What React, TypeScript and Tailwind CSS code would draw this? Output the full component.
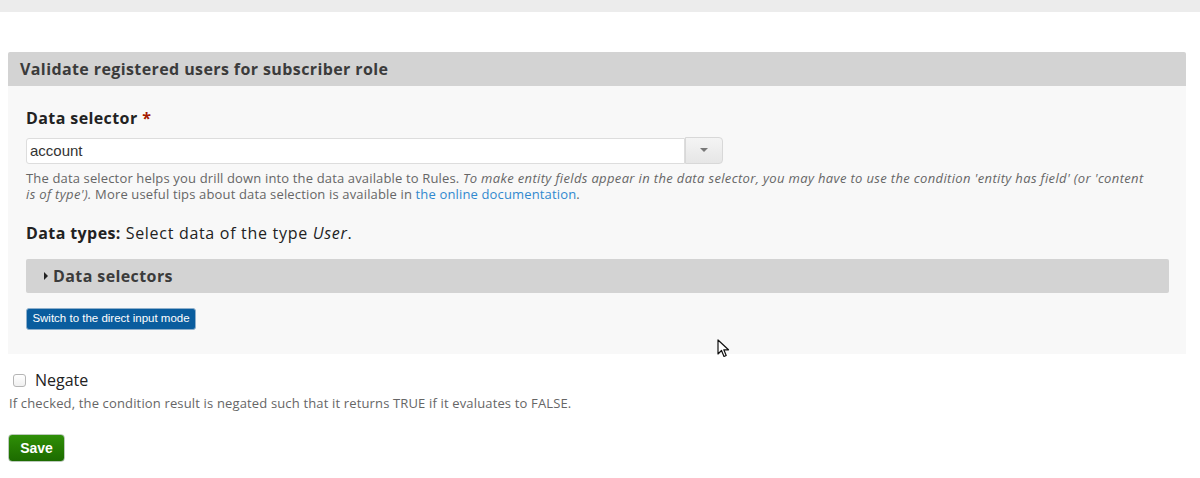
import React from "react";

const sans = "font-['Open_Sans','Noto_Sans',sans-serif]";
const arial = "font-['Liberation_Sans',Arial,sans-serif]";

function Cursor() {
  return (
    <svg width="14" height="20" viewBox="0 0 14 20" className="absolute left-[717px] top-[339px]">
      <path d="M1 1 L1 15 L4.5 11.5 L7 17.5 L9.2 16.5 L6.8 10.8 L11.5 10.8 Z" fill="#fff" stroke="#111" strokeWidth="1.2" strokeLinejoin="round" />
    </svg>
  );
}

export default function App() {
  return (
    <div className={`relative w-full h-[478px] bg-white text-[#333] ${sans}`}>
      <div className="h-[12px] bg-[#ececec]" />

      <div className="pl-2 pr-[14px] pt-[40px]">
        {/* Condition fieldset */}
        <div className="rounded-[2px]">
          <div className="h-[34px] bg-[#d3d3d3] px-3 flex items-center text-[16px] tracking-[0.4px] font-bold text-[#3b3b3b] rounded-t-[2px]">
            Validate registered users for subscriber role
          </div>
          <div className="bg-[#f8f8f8] pl-[18px] pr-[17px] pt-[22px] pb-[24px]">
            <div className="text-[16px] tracking-[0.4px] font-bold leading-[20px] text-[#222]">
              Data selector <span className="text-[#a51b00]">*</span>
            </div>
            <div className="mt-[10px] flex items-center">
              <div className={`w-[659px] h-[26px] bg-white border border-[#ddd] rounded-l-[3px] pl-[3px] flex items-center text-[15px] text-[#333] ${arial}`}>
                account
              </div>
              <div className="w-[38px] h-[27px] -mt-[2px] border border-[#d8d8d8] rounded-r-[4px] bg-gradient-to-b from-[#f4f4f4] to-[#e6e6e6] flex items-center justify-center">
                <span className="block w-0 h-0 border-l-[4px] border-r-[4px] border-t-[4px] border-l-transparent border-r-transparent border-t-[#777]" />
              </div>
            </div>
            <div className="mt-[6px] max-w-[1128px] text-[13px] leading-[16px] text-[#666] tracking-[0.15px]">
              The data selector helps you drill down into the data available to Rules.{" "}
              <em className="tracking-[0.35px]">
                To make entity fields appear in the data selector, you may have to use the condition 'entity has field' (or 'content is of type').
              </em>{" "}
              More useful tips about data selection is available in{" "}
              <a className="text-[#3189cf]">the online documentation</a>.
            </div>

            <div className="mt-[21px] text-[16px] tracking-[0.7px] leading-[20px] text-[#222]">
              <span className="font-bold tracking-[0.4px]">Data types:</span> Select data of the type <em>User</em>.
            </div>

            <div className="mt-[16px] h-[34px] bg-[#d3d3d3] rounded-[2px] flex items-center pl-[18px] gap-[5px]">
              <span className="block w-0 h-0 border-t-[4px] border-b-[4px] border-l-[4px] border-t-transparent border-b-transparent border-l-[#222]" />
              <span className="text-[16px] tracking-[0.4px] font-bold text-[#3b3b3b]">Data selectors</span>
            </div>

            <button
              className={`mt-[15px] h-[22px] w-[170px] rounded-[3px] border border-[#8fb0cc] bg-[#0a5d9e] text-white text-[11.5px] ${arial}`}
            >
              Switch to the direct input mode
            </button>
          </div>
        </div>

        {/* Negate */}
        <div className="mt-[15px] flex items-center pl-[5px] h-[22px]">
          <span className="block w-[13px] h-[13px] rounded-[3px] border border-[#b5b5b5] bg-gradient-to-b from-white to-[#f0f0f0]" />
          <span className="ml-[9px] text-[16px] text-[#222]">Negate</span>
        </div>
        <div className="mt-[4px] pl-[1px] text-[13px] leading-[16px] text-[#666] tracking-[0.15px]">
          If checked, the condition result is negated such that it returns TRUE if it evaluates to FALSE.
        </div>

        <button
          className={`mt-[23px] h-[28px] w-[57px] rounded-[4px] border border-[#bccabc] bg-gradient-to-b from-[#2f8f08] to-[#1c6b00] text-white text-[14px] font-bold ${arial}`}
        >
          Save
        </button>
      </div>

      <Cursor />
    </div>
  );
}
